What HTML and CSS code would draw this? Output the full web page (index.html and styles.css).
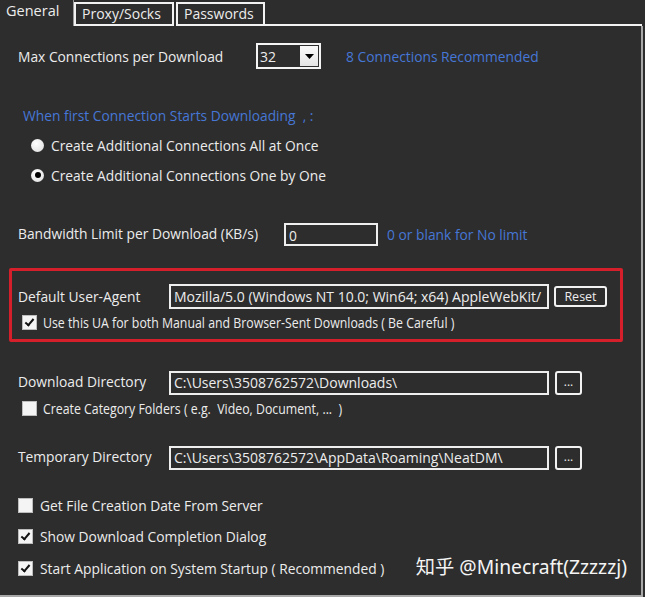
FILE: index.html
```html
<!DOCTYPE html>
<html>
<head>
<meta charset="utf-8">
<link rel="stylesheet" href="styles.css">
</head>
<body>
<div class="tabs">
  <div class="tab active">General</div>
  <div class="tab">Proxy/Socks</div>
  <div class="tab">Passwords</div>
  <div class="tabline"></div>
</div>
<div class="panel">
  <div class="row r-max">
    <span class="label w238">Max Connections per Download</span>
    <div class="select"><span class="sel-val">32</span><span class="sel-btn"><svg width="9" height="5" viewBox="0 0 9 5"><path d="M0 0H9L4.5 5Z" fill="#000"/></svg></span></div>
    <span class="hint hint-max">8 Connections Recommended</span>
  </div>
  <div class="hint group-title">When first Connection Starts Downloading &nbsp;, :</div>
  <div class="row radio-row r1"><span class="radio"></span><span class="label">Create Additional Connections All at Once</span></div>
  <div class="row radio-row r2"><span class="radio on"></span><span class="label">Create Additional Connections One by One</span></div>
  <div class="row r-bw">
    <span class="label w266">Bandwidth Limit per Download (KB/s)</span>
    <div class="input bw">0</div>
    <span class="hint hint-bw">0 or blank for No limit</span>
  </div>
  <div class="redbox">
    <div class="row r-ua">
      <span class="label w151">Default User-Agent</span>
      <div class="input path">Mozilla/5.0 (Windows NT 10.0; Win64; x64) AppleWebKit/</div>
      <div class="btn reset">Reset</div>
    </div>
    <div class="row small-cb r-uacb"><span class="cb on"></span><span class="small">Use this UA for both Manual and Browser-Sent Downloads ( Be Careful )</span></div>
  </div>
  <div class="row r-dl">
    <span class="label w151">Download Directory</span>
    <div class="input path">C:\Users\3508762572\Downloads\</div>
    <div class="btn dots">...</div>
  </div>
  <div class="row small-cb r-cat"><span class="cb"></span><span class="small">Create Category Folders ( e.g.&nbsp; Video, Document, ...&nbsp; )</span></div>
  <div class="row r-tmp">
    <span class="label w151">Temporary Directory</span>
    <div class="input path">C:\Users\3508762572\AppData\Roaming\NeatDM\</div>
    <div class="btn dots">...</div>
  </div>
  <div class="row cb-row r-c1"><span class="cb"></span><span class="label">Get File Creation Date From Server</span></div>
  <div class="row cb-row r-c2"><span class="cb on"></span><span class="label">Show Download Completion Dialog</span></div>
  <div class="row cb-row r-c3"><span class="cb on"></span><span class="label">Start Application on System Startup ( Recommended )</span><span class="watermark">知乎 @Minecraft(Zzzzzj)</span></div>
</div>
</body>
</html>
```
FILE: styles.css
```css
html, body {
  margin: 0;
  padding: 0;
  background: #2d2d2d;
}
body {
  width: 645px;
  height: 597px;
  overflow: hidden;
  font-family: "Open Sans", "Noto Sans", sans-serif;
  font-size: 13.8px;
  color: #ececec;
}
.tabs {
  display: flex;
  height: 26px;
  align-items: flex-end;
}
.tab {
  box-sizing: border-box;
  height: 24px;
  padding: 0 7px;
  border: 2px solid #f2f2f2;
  line-height: 19px;
  font-size: 14px;
  margin-right: 2px;
}
.tab.active {
  border: none;
  height: 26px;
  line-height: 22px;
  width: 74px;
  padding-left: 6px;
  margin-right: 0;
  border-right: 1px solid #9a9a9a;
  font-size: 14.5px;
}
.tabline {
  flex: 0 0 377px;
  height: 2px;
  background: #f2f2f2;
}
.tabs .tab:nth-child(2) { width: 100px; padding-left: 6px; }
.tabs .tab:nth-child(3) { width: 89px; padding-left: 6px; margin-right: 0; }
.panel {
  box-sizing: border-box;
  width: 643px;
  height: 571px;
  border-right: 2px solid #a8a8a8;
  border-bottom: 2px solid #a8a8a8;
  padding-top: 17px;
}
.row {
  display: flex;
  align-items: center;
}
.label { white-space: nowrap; }
.w238 { width: 238px; margin-left: 18px; flex: none; }
.w266 { width: 266px; margin-left: 18px; flex: none; }
.w151 { width: 151px; margin-left: 18px; flex: none; }
.hint { color: #4677d6; white-space: nowrap; }
.r-max { height: 26px; }
.select {
  box-sizing: border-box;
  width: 65px;
  height: 26px;
  border: 2px solid #f4f4f4;
  display: flex;
  align-items: center;
}
.sel-val { flex: 1; padding-left: 2px; font-size: 14px; }
.sel-btn {
  width: 18px;
  height: 20px;
  margin-right: 1px;
  background: linear-gradient(#fafafa, #e4e4e4);
  display: flex;
  align-items: center;
  justify-content: center;
}
.hint-max { margin-left: 25px; }
.group-title { margin: 37px 0 0 23px; height: 20px; line-height: 20px; }
.radio-row { height: 20px; margin-left: 31px; }
.r1 { margin-top: 9px; }
.r2 { margin-top: 10px; }
.radio {
  width: 13px;
  height: 13px;
  border-radius: 50%;
  background: radial-gradient(circle at 40% 35%, #ffffff, #dcdcdc);
  margin-right: 7px;
  position: relative;
  flex: none;
}
.radio.on::after {
  content: "";
  position: absolute;
  left: 3.5px;
  top: 3.5px;
  width: 6px;
  height: 6px;
  border-radius: 50%;
  background: #000;
}
.r-bw { margin-top: 38px; height: 23px; }
.r-bw .label { position: relative; top: -1px; }
.input {
  box-sizing: border-box;
  height: 23px;
  border: 2px solid #eeeeee;
  padding: 0 3px;
  line-height: 19px;
  white-space: nowrap;
  overflow: hidden;
  background: #2d2d2d;
}
.input.bw { width: 94px; padding-top: 1px; }
.hint-bw { margin-left: 9px; }
.redbox {
  box-sizing: border-box;
  margin: 22px 0 0 9px;
  width: 614px;
  height: 74px;
  border: 3px solid #d5202b;
  border-radius: 2px;
  padding-top: 13px;
}
.redbox .w151 { margin-left: 6px; }
.r-ua { height: 25px; }
.r-ua .input.path { height: 25px; line-height: 21px; }
.input.path { width: 380px; height: 24px; line-height: 20px; flex: none; font-size: 14px; }
.btn {
  box-sizing: border-box;
  border: 2px solid #f2f2f2;
  border-radius: 3px;
  text-align: center;
  flex: none;
}
.reset {
  width: 53px;
  height: 21px;
  line-height: 17px;
  font-size: 12.5px;
  margin-left: 5px;
}
.dots {
  width: 27px;
  height: 24px;
  line-height: 18px;
  font-size: 12px;
  margin-left: 6px;
}
.small-cb { height: 16px; }
.redbox .small-cb { margin: 5px 0 0 10px; }
.r-cat { margin: 5px 0 0 22px; }
.small {
  font-size: 13.7px;
  white-space: nowrap;
  transform: scaleX(0.9);
  transform-origin: left center;
}
.cb {
  box-sizing: border-box;
  width: 15px;
  height: 15px;
  background: #f4f4f4;
  border: 1px solid #bdbdbd;
  margin-right: 6px;
  flex: none;
  position: relative;
}
.cb.on::after {
  content: "";
  position: absolute;
  left: 4px;
  top: 1px;
  width: 3px;
  height: 7px;
  border: solid #111;
  border-width: 0 2px 2px 0;
  transform: rotate(40deg);
}
.r-dl { margin-top: 29px; height: 24px; }
.r-tmp { margin-top: 30px; height: 24px; }
.r-dl .label, .r-tmp .label { position: relative; top: -2px; }
.cb-row { height: 16px; margin-left: 18px; }
.cb-row .cb { margin-right: 7px; }
.r-c1 { margin-top: 27px; }
.r-c2 { margin-top: 15px; }
.r-c3 { margin-top: 16px; }
.watermark {
  margin-left: auto;
  margin-right: 14px;
  font-family: "Noto Sans", "Noto Sans CJK SC", sans-serif;
  font-size: 19.3px;
  color: #f4f4f4;
  white-space: nowrap;
  position: relative;
  top: -2px;
}
```
